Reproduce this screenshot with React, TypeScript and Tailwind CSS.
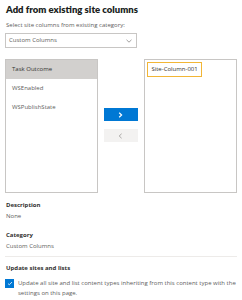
import { useState } from "react";

const leftItems = ["Task Outcome", "WSEnabled", "WSPublishState"];

const App = () => {
  const [selected, setSelected] = useState("Task Outcome");
  const [checked, setChecked] = useState(true);

  return (
    <div
      className="w-[242px] h-[300px] overflow-hidden bg-white px-[5px] text-[#605e5c]"
      style={{ fontFamily: '"Open Sans", "Noto Sans", sans-serif' }}
    >
      <h1
        className="pt-[3px] pl-[1px] text-[9.5px] font-extrabold leading-[14px] text-[#201f1e]"
        style={{ fontFamily: 'Lato, "Open Sans", sans-serif' }}
      >
        Add from existing site columns
      </h1>
      <p className="mt-[4px] pl-[1px] text-[6px] leading-[8px]">
        Select site columns from existing category:
      </p>

      <div className="mt-[4px] flex h-[15px] w-[132px] items-center justify-between border border-[#c8c6c4] pl-[3px] pr-[4px] text-[6px]">
        <span>Custom Columns</span>
        <svg width="6" height="4" viewBox="0 0 6 4" fill="none">
          <path d="M0.5 0.8 L3 3.2 L5.5 0.8" stroke="#8a8886" strokeWidth="0.8" />
        </svg>
      </div>

      <div className="mt-[11px] flex h-[134px]">
        <div className="w-[93px] border border-[#c8c6c4]">
          {leftItems.map((item) => (
            <button
              key={item}
              onClick={() => setSelected(item)}
              className={`flex h-[19px] w-full items-center pl-[6px] text-left text-[6px] ${
                selected === item ? "bg-[#d2d0ce] text-[#323130]" : ""
              }`}
            >
              {item}
            </button>
          ))}
        </div>

        <div className="flex w-[47px] flex-col items-center pt-[49px]">
          <button className="flex h-[13px] w-[34px] items-center justify-center bg-[#0078d4]">
            <svg width="5" height="6" viewBox="0 0 5 6" fill="none">
              <path d="M1.2 0.8 L3.6 3 L1.2 5.2" stroke="white" strokeWidth="1.2" />
            </svg>
          </button>
          <button className="mt-[8px] flex h-[13px] w-[34px] items-center justify-center bg-[#f3f2f1]">
            <svg width="5" height="6" viewBox="0 0 5 6" fill="none">
              <path d="M3.6 0.8 L1.2 3 L3.6 5.2" stroke="#a19f9d" strokeWidth="0.9" />
            </svg>
          </button>
        </div>

        <div className="w-[93px] border border-[#c8c6c4] pl-[2px] pt-[2px]">
          <div className="flex h-[15px] w-[55px] items-center border border-[#f2b636] pl-[3px] text-[6px] text-[#323130]">
            Site-Column-001
          </div>
        </div>
      </div>

      <div className="mt-[8px] pl-[1px]">
        <p className="text-[6px] font-bold leading-[9px] text-[#323130]">Description</p>
        <p className="mt-[2px] text-[6px] leading-[9px]">None</p>
        <p className="mt-[10px] text-[6px] font-bold leading-[9px] text-[#323130]">Category</p>
        <p className="mt-[2px] text-[6px] leading-[9px]">Custom Columns</p>
      </div>

      <div className="mt-[5px] border-t border-[#edebe9]" />

      <p className="mt-[7px] pl-[1px] text-[6px] font-bold leading-[9px] text-[#323130]">
        Update sites and lists
      </p>

      <label className="mt-[5px] flex items-start gap-[4px]">
        <button
          onClick={() => setChecked(!checked)}
          className={`mt-[1px] flex h-[9px] w-[9px] shrink-0 items-center justify-center ${
            checked ? "bg-[#0078d4]" : "border border-[#323130]"
          }`}
        >
          {checked && (
            <svg width="6" height="5" viewBox="0 0 6 5" fill="none">
              <path d="M1 2.6 L2.3 3.8 L5 1" stroke="white" strokeWidth="0.8" />
            </svg>
          )}
        </button>
        <span className="text-[6px] leading-[10px]">
          Update all site and list content types inheriting from this content type with the
          settings on this page.
        </span>
      </label>
    </div>
  );
};

export default App;
